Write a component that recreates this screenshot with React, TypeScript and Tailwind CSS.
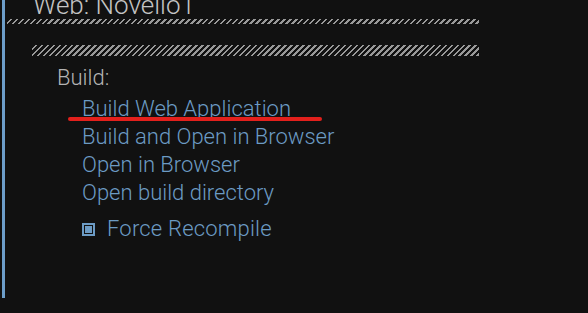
import * as React from "react"

const hatch =
  "bg-[repeating-linear-gradient(135deg,#111111_0px,#111111_2.4px,#999999_2.4px,#999999_4.2px)]"

const actions = [
  "Build Web Application",
  "Build and Open in Browser",
  "Open in Browser",
  "Open build directory",
]

export default function App() {
  return (
    <div className="h-[313px] w-[588px] overflow-hidden bg-[#111111] font-['Roboto',sans-serif] font-light">
      <div className="relative ml-[2px] flex h-[298px] flex-col border-l-[3px] border-[#6d9ec9]">
        <div className="-mt-[10px] h-[29px] shrink-0 pl-[28px] text-[26px] leading-[30px] text-[#c4c4c4]">
          Web: Novello1
        </div>
        <div className={`ml-[2px] h-[5px] w-[472px] shrink-0 ${hatch}`} />
        <div className={`ml-[27px] mt-[21px] h-[11px] w-[447px] shrink-0 ${hatch}`} />

        <div className="ml-[52px] mt-[8px] text-[22px] leading-[28px] text-[#b4b4b4]">
          Build:
        </div>
        <div className="ml-[77px] mt-[3px] flex flex-col text-[22px] leading-[28px] text-[#6c9bc4]">
          {actions.map((a) => (
            <span key={a}>{a}</span>
          ))}
          <div className="mt-[8px] flex items-center gap-[12px]">
            <span className="flex h-[13px] w-[13px] items-center justify-center border-2 border-[#6c9bc4]">
              <span className="h-[7px] w-[7px] bg-[#6c9bc4]" />
            </span>
            <span className="tracking-[0.2px]">Force Recompile</span>
          </div>
        </div>

        {/* red annotation underline */}
        <div className="absolute left-[63px] top-[117px] h-[4px] w-[254px] rounded-full bg-[#e3201c]" />
      </div>
    </div>
  )
}
